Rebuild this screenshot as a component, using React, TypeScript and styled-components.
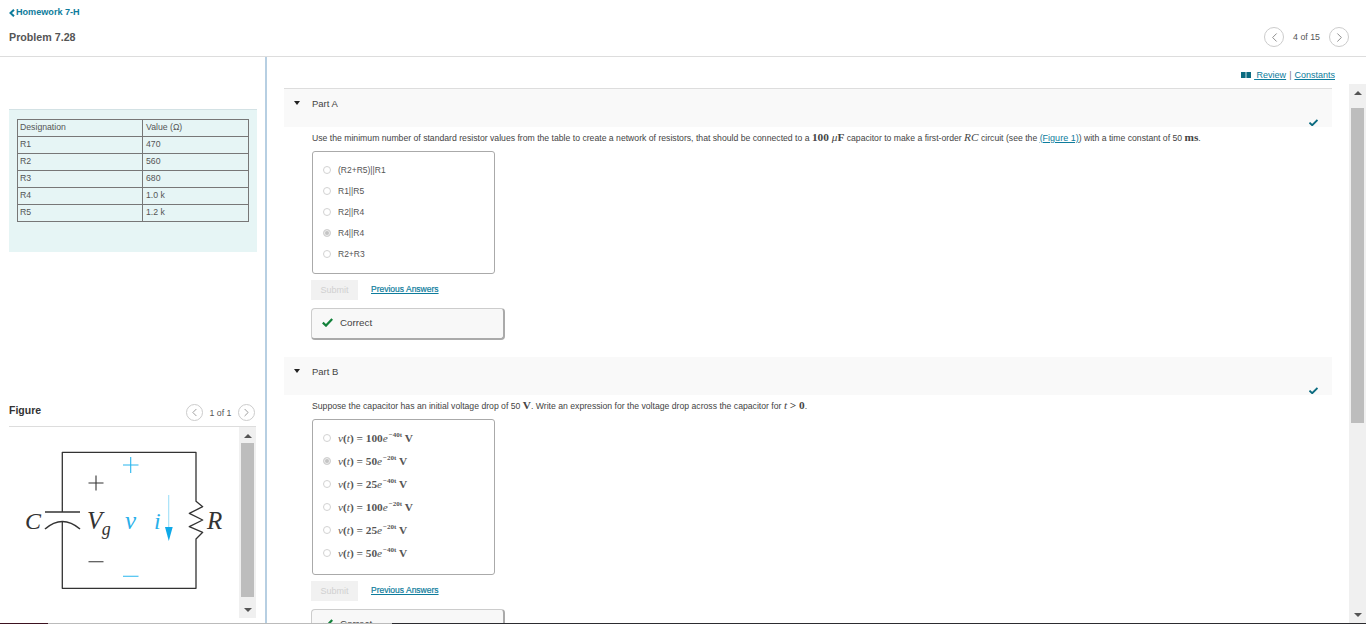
import styled, { createGlobalStyle } from "styled-components";
import { ChevronLeft, ChevronRight } from "lucide-react";
import type { ReactNode } from "react";

const GlobalStyle = createGlobalStyle`
  html, body {
    margin: 0;
    padding: 0;
    background: #fff;
    overflow: hidden;
  }
  * {
    box-sizing: border-box;
  }
  body {
    font-family: "Liberation Sans", Arial, sans-serif;
    color: #444;
  }
`;

const resistors = [
  ["Designation", "Value (Ω)"],
  ["R1", "470"],
  ["R2", "560"],
  ["R3", "680"],
  ["R4", "1.0 k"],
  ["R5", "1.2 k"],
];

const partAOptions = ["(R2+R5)||R1", "R1||R5", "R2||R4", "R4||R4", "R2+R3"];

const partBOptions = [
  ["100", "40"],
  ["50", "20"],
  ["25", "40"],
  ["100", "20"],
  ["25", "20"],
  ["50", "40"],
];

const Pager = ({ label, small }: { label: string; small?: boolean }) => (
  <PagerRow $small={small}>
    <RoundButton $small={small}>
      <ChevronLeft size={small ? 13 : 15} strokeWidth={1.5} />
    </RoundButton>
    <PagerLabel>{label}</PagerLabel>
    <RoundButton $small={small}>
      <ChevronRight size={small ? 13 : 15} strokeWidth={1.5} />
    </RoundButton>
  </PagerRow>
);

const Scrollbar = ({ $wide }: { $wide?: boolean }) => (
  <ScrollTrack>
    <ArrowUp />
    <ScrollThumb $wide={$wide} />
    <ScrollRest />
    <ArrowDown />
  </ScrollTrack>
);

const Check = () => (
  <svg width="9" height="7" viewBox="0 0 9 7">
    <path d="M0.5 3.6 L3.2 6.2 L8.5 1" fill="none" stroke="#0b6b80" strokeWidth="1.9" />
  </svg>
);

const Circuit = () => (
  <svg width="230" height="189" viewBox="0 0 230 189">
    <g fill="none" stroke="#333" strokeWidth="1.3">
      <path
        d="M53.300 85 V25.300 H187 V74.300 L193.700 79.700 L180.300 86.300 L193.700 93 L180.300 99.700 L193.700 105.300 L187 112 V161.300 H53.300 V95"
        strokeLinejoin="round"
      />
      <path d="M36 85 H71" strokeWidth="1.600" />
      <path d="M36 102 Q53.300 87 71 102" strokeWidth="1.600" />
      <path d="M79.500 56 H94.500 M87 48.500 V63.500 M79.500 134.700 H94.500" strokeWidth="1.100" />
    </g>
    <g fill="none" stroke="#29b6ee" strokeWidth="1.100">
      <path d="M114 38 H129.500 M121.700 30 V46 M114 149.300 H129.500" />
      <path d="M159.700 68 V101" stroke="#9fe0f8" />
    </g>
    <path d="M156 100 H163.700 L159.800 114 Z" fill="#0fa9e8" />
    <SerifItalic x="16" y="102" fontSize="24" fill="#333">C</SerifItalic>
    <SerifItalic x="78" y="102" fontSize="25" fill="#333">V</SerifItalic>
    <SerifItalic x="92.700" y="108" fontSize="18" fill="#333">g</SerifItalic>
    <SerifItalic x="116" y="102" fontSize="25" fill="#29b0ea">v</SerifItalic>
    <SerifItalic x="145" y="102" fontSize="24" fill="#29b0ea">i</SerifItalic>
    <SerifItalic x="198" y="102" fontSize="25" fill="#333">R</SerifItalic>
  </svg>
);

const Radio = ({ on, children }: { on?: boolean; children: ReactNode }) => (
  <RadioRow>
    <RadioDot $on={on} />
    {children}
  </RadioRow>
);

const Expression = ({ value, rate }: { value: string; rate: string }) => (
  <ExpressionText>
    <i>v</i>(<i>t</i>) = {value}<i>e</i>
    <Sup>−{rate}t</Sup> V
  </ExpressionText>
);

const PartHeader = ({ title, first }: { title: string; first?: boolean }) => (
  <PartBar $first={first}>
    <Caret />
    <PartTitle>{title}</PartTitle>
    <PartCheck>
      <Check />
    </PartCheck>
  </PartBar>
);

const Actions = () => (
  <ActionRow>
    <SubmitButton>Submit</SubmitButton>
    <PreviousLink>Previous Answers</PreviousLink>
  </ActionRow>
);

const Correct = () => (
  <CorrectBox>
    <svg width="11" height="9" viewBox="0 0 11 9">
      <path d="M0.8 4.6 L4 7.6 L10.2 1" fill="none" stroke="#12813a" strokeWidth="2.200" />
    </svg>
    Correct
  </CorrectBox>
);

export default function App() {
  return (
    <Page>
      <GlobalStyle />
      <Header>
        <BackLink>
          <svg width="6" height="8" viewBox="0 0 6 8">
            <path d="M5 0.7 L1.500 4 L5 7.300" fill="none" stroke="#0e7c9c" strokeWidth="2" />
          </svg>
          Homework 7-H
        </BackLink>
        <TitleRow>
          <Title>Problem 7.28</Title>
          <Pager label="4 of 15" />
        </TitleRow>
      </Header>
      <Body>
        <LeftPane>
          <TablePanel>
            <Table>
              <tbody>
                {resistors.map(([name, value]) => (
                  <tr key={name}>
                    <Cell>{name}</Cell>
                    <Cell>{value}</Cell>
                  </tr>
                ))}
              </tbody>
            </Table>
          </TablePanel>
          <FigureHeader>
            <FigureTitle>Figure</FigureTitle>
            <Pager label="1 of 1" small />
          </FigureHeader>
          <FigureArea>
            <FigureCanvas>
              <Circuit />
            </FigureCanvas>
            <Scrollbar />
          </FigureArea>
        </LeftPane>
        <RightPane>
          <TopLinks>
            <svg width="10" height="6" viewBox="0 0 10 6">
              <path d="M0 0 H4.600 V6 H0 Z M5.400 0 H10 V6 H5.400 Z" fill="#0b6b80" />
            </svg>
            <TextLink>&nbsp;Review</TextLink>
            <Pipe>|</Pipe>
            <TextLink>Constants</TextLink>
          </TopLinks>
          <ScrollArea>
            <Parts>
              <PartHeader title="Part A" first />
              <PartBody>
                <Prompt>
                  Use the minimum number of standard resistor values from the table to create a
                  network of resistors, that should be connected to a{" "}
                  <MathText>100 <i>μ</i>F</MathText> capacitor to make a first-order{" "}
                  <MathText><i>RC</i></MathText> circuit (see the <TextLink>(Figure 1)</TextLink>)
                  with a time constant of 50 <MathText>ms</MathText>.
                </Prompt>
                <OptionBox>
                  {partAOptions.map((option) => (
                    <Radio key={option} on={option === "R4||R4"}>
                      {option}
                    </Radio>
                  ))}
                </OptionBox>
                <Actions />
                <Correct />
              </PartBody>
              <PartHeader title="Part B" />
              <PartBody>
                <Prompt>
                  Suppose the capacitor has an initial voltage drop of 50 <MathText>V</MathText>.
                  Write an expression for the voltage drop across the capacitor for{" "}
                  <MathText><i>t</i> &gt; 0</MathText>.
                </Prompt>
                <OptionBox $tall>
                  {partBOptions.map(([value, rate], index) => (
                    <Radio key={value + rate} on={index === 1}>
                      <Expression value={value} rate={rate} />
                    </Radio>
                  ))}
                </OptionBox>
                <Actions />
                <Correct />
              </PartBody>
            </Parts>
            <Scrollbar $wide />
          </ScrollArea>
        </RightPane>
      </Body>
      <FooterLine>
        <FooterSegment $width={48} $color="#3c1220" />
        <FooterSegment $width={344} $color="#bbb" />
        <FooterSegment $color="#2c2c30" />
      </FooterLine>
    </Page>
  );
}

const Page = styled.div`
  display: flex;
  flex-direction: column;
  height: 624px;
  overflow: hidden;
  width: 1366px;
`;

const Header = styled.header`
  border-bottom: 1px solid #ddd;
  display: flex;
  flex: 0 0 57px;
  flex-direction: column;
  padding: 7px 17px 0 9px;
`;

const BackLink = styled.a`
  align-items: center;
  color: #0e7c9c;
  display: flex;
  font-size: 9.100px;
  font-weight: 700;
  gap: 1px;
  height: 11px;
  line-height: 11px;
`;

const TitleRow = styled.div`
  align-items: center;
  display: flex;
  justify-content: space-between;
  margin-top: 9px;
`;

const Title = styled.h1`
  color: #555;
  font-size: 10.700px;
  font-weight: 700;
  margin: 0;
`;

const PagerRow = styled.div<{ $small?: boolean }>`
  align-items: center;
  display: flex;
  gap: ${(p) => (p.$small ? "6.500px" : "9px")};
  margin-right: ${(p) => (p.$small ? "1px" : "0")};
`;

const RoundButton = styled.span<{ $small?: boolean }>`
  align-items: center;
  border: 1px solid #ccc;
  border-radius: 50%;
  color: #888;
  display: flex;
  height: ${(p) => (p.$small ? "17px" : "20px")};
  justify-content: center;
  width: ${(p) => (p.$small ? "17px" : "20px")};
`;

const PagerLabel = styled.span`
  color: #555;
  font-size: 8.800px;
`;

const Body = styled.div`
  display: flex;
  flex: 1;
  min-height: 0;
`;

const LeftPane = styled.aside`
  border-right: 2px solid #b7cfe2;
  display: flex;
  flex: 0 0 267px;
  flex-direction: column;
  min-width: 0;
  padding: 52px 9px 0 9px;
`;

const TablePanel = styled.div`
  background: #e6f5f5;
  border-top: 1px solid #d3e2e5;
  flex: 0 0 143px;
  padding: 9px 8px 0;
  width: 248px;
`;

const Table = styled.table`
  border-collapse: collapse;
  table-layout: fixed;
  width: 232px;
`;

const Cell = styled.td`
  border: 1px solid #777;
  color: #555;
  font-size: 8.700px;
  height: 17px;
  line-height: 14px;
  padding: 0 3px 2px;

  &:first-child {
    padding-left: 2px;
    width: 125px;
  }
`;

const FigureHeader = styled.div`
  align-items: flex-start;
  border-bottom: 1px solid #ddd;
  display: flex;
  flex: 0 0 33px;
  justify-content: space-between;
  margin-top: 142px;
  padding-top: 10px;
`;

const FigureTitle = styled.h2`
  color: #333;
  font-size: 10.500px;
  font-weight: 700;
  line-height: 12px;
  margin: 0;
`;

const FigureArea = styled.div`
  display: flex;
  flex: 1;
  margin-bottom: 5px;
  min-height: 0;
`;

const FigureCanvas = styled.div`
  flex: 1;
  overflow: hidden;
`;

const SerifItalic = styled.text`
  font-family: "Liberation Serif", serif;
  font-style: italic;
`;

const ScrollTrack = styled.div`
  align-items: center;
  background: #f0f0f0;
  display: flex;
  flex: 0 0 17px;
  flex-direction: column;
  padding: 7px 0 6px;
`;

const ArrowUp = styled.span`
  border-bottom: 4px solid #555;
  border-left: 4px solid transparent;
  border-right: 4px solid transparent;
  height: 0;
  width: 0;
`;

const ArrowDown = styled.span`
  border-left: 4px solid transparent;
  border-right: 4px solid transparent;
  border-top: 4px solid #555;
  height: 0;
  width: 0;
`;

const ScrollThumb = styled.div<{ $wide?: boolean }>`
  background: #bdbdbd;
  height: ${(p) => (p.$wide ? "315px" : "154px")};
  margin-top: ${(p) => (p.$wide ? "13px" : "5px")};
  width: 13px;
`;

const ScrollRest = styled.div`
  flex: 1;
`;

const RightPane = styled.main`
  display: flex;
  flex: 1;
  flex-direction: column;
  min-width: 0;
`;

const TopLinks = styled.div`
  align-items: center;
  display: flex;
  flex: 0 0 27px;
  font-size: 9px;
  gap: 3px;
  justify-content: flex-end;
  padding: 8px 31px 0 0;
`;

const TextLink = styled.a`
  color: #0e7c9c;
  font-size: 9px;
  text-decoration: underline;
`;

const Pipe = styled.span`
  color: #777;
`;

const ScrollArea = styled.div`
  display: flex;
  flex: 1;
  min-height: 0;
`;

const Parts = styled.div`
  flex: 1;
  overflow: hidden;
  padding: 4px 17px 0;
`;

const PartBar = styled.div<{ $first?: boolean }>`
  align-items: flex-start;
  background: #f9f9f9;
  border-top: ${(p) => (p.$first ? "1px solid #ddd" : "none")};
  display: flex;
  height: ${(p) => (p.$first ? "39px" : "38px")};
  padding: 9px 0 0 10px;
  position: relative;
`;

const Caret = styled.span`
  border-left: 3.500px solid transparent;
  border-right: 3.500px solid transparent;
  border-top: 4px solid #222;
  height: 0;
  margin-top: 3px;
  width: 0;
`;

const PartTitle = styled.span`
  color: #444;
  font-size: 9.500px;
  margin-left: 12px;
`;

const PartCheck = styled.span`
  bottom: 1px;
  line-height: 0;
  position: absolute;
  right: 14px;
`;

const PartBody = styled.div`
  padding: 6px 0 17px 27px;
`;

const Prompt = styled.p`
  color: #444;
  font-size: 8.660px;
  height: 11px;
  line-height: 11px;
  margin: 0 0 7px 1px;
  white-space: nowrap;
`;

const MathText = styled.span`
  font-family: "Liberation Serif", serif;
  font-size: 11.300px;
  font-weight: 700;
  line-height: 0;

  i {
    font-weight: 400;
  }
`;

const ExpressionText = styled(MathText)`
  padding-bottom: 3px;
`;

const Sup = styled.sup`
  font-size: 7px;
  line-height: 0;
  margin-left: 1px;
`;

const OptionBox = styled.div<{ $tall?: boolean }>`
  border: 1px solid #aaa;
  border-radius: 3px;
  display: flex;
  flex-direction: column;
  gap: ${(p) => (p.$tall ? "3px" : "1px")};
  height: ${(p) => (p.$tall ? "156px" : "123px")};
  margin-left: 1px;
  padding: 8px 0 0 10px;
  width: 183px;
`;

const RadioRow = styled.label`
  align-items: center;
  color: #555;
  display: flex;
  font-size: 8.500px;
  gap: 7px;
  height: 20px;
`;

const RadioDot = styled.span<{ $on?: boolean }>`
  background: ${(p) => (p.$on ? "#c4c4c4" : "#fff")};
  border: 1px solid #d2d2d2;
  border-radius: 50%;
  box-shadow: ${(p) => (p.$on ? "inset 0 0 0 1px #eee" : "none")};
  flex: 0 0 8px;
  height: 8px;
  width: 8px;
`;

const ActionRow = styled.div`
  align-items: center;
  display: flex;
  gap: 13px;
  margin-top: 6px;
`;

const SubmitButton = styled.span`
  align-items: center;
  background: #f1f1f1;
  color: #d0d0d0;
  display: flex;
  font-size: 9px;
  height: 20px;
  justify-content: center;
  width: 47px;
`;

const PreviousLink = styled.a`
  -webkit-text-stroke: 0.2px #0e7c9c;
  color: #0e7c9c;
  font-size: 8.500px;
  margin-top: -2px;
  text-decoration: underline;
`;

const CorrectBox = styled.div`
  align-items: center;
  background: #f8f8f8;
  border: 1px solid #ccc;
  border-bottom: 2px solid #aaa;
  border-radius: 4px;
  border-right: 2px solid #aaa;
  color: #444;
  display: flex;
  font-size: 9.800px;
  gap: 7px;
  height: 32px;
  margin-top: 8px;
  padding: 0 0 2px 10px;
  width: 194px;
`;

const FooterLine = styled.div`
  display: flex;
  flex: 0 0 1px;
`;

const FooterSegment = styled.div<{ $width?: number; $color: string }>`
  background: ${(p) => p.$color};
  flex: ${(p) => (p.$width ? `0 0 ${p.$width}px` : "1")};
`;
